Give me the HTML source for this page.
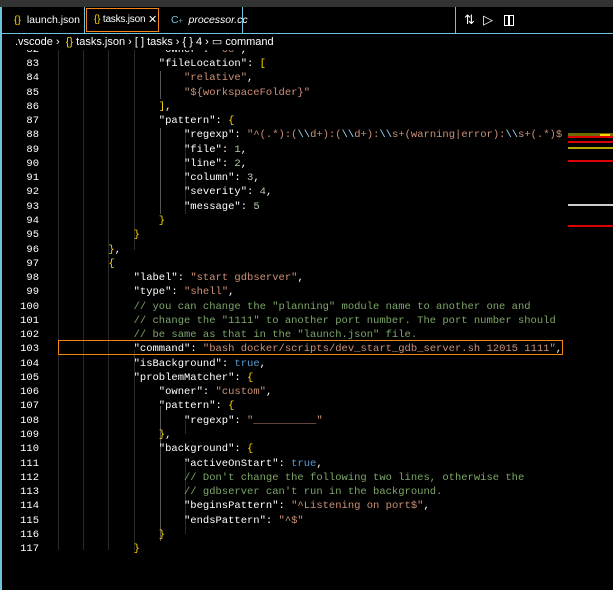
<!DOCTYPE html>
<html><head><meta charset="utf-8"><style>
*{margin:0;padding:0;box-sizing:border-box}
body{width:613px;height:590px;background:#000;overflow:hidden;position:relative;font-family:"Liberation Sans",sans-serif;color:#fff}
.top{position:absolute;left:0;top:0;width:613px;height:7px;background:#333}
.tabs{position:absolute;left:0;top:7px;width:613px;height:27px;border-left:2px solid #6fc3df;border-bottom:1px solid #6fc3df}
.tab{position:absolute;top:0;height:26px;font-size:10.5px;line-height:26px;color:#fff;white-space:nowrap}
.vd{position:absolute;top:0;width:1px;height:26px;background:#6fc3df}
.bc{position:absolute;left:0;top:34px;width:613px;height:16px;border-left:2px solid #6fc3df;font-size:11px;line-height:16px;color:#fff;padding-left:13px;white-space:pre}
.ed{position:absolute;left:0;top:50px;width:613px;height:540px;border-left:2px solid #6fc3df;overflow:hidden}
.ln{position:absolute;width:37px;text-align:right;font:10.5px/14.27px "Liberation Mono","DejaVu Sans Mono",monospace;color:#fff}
.cl{position:absolute;font:10.5px/14.27px "Liberation Mono","DejaVu Sans Mono",monospace;white-space:pre;color:#fff}
.g{position:absolute;width:1px;background:#2a2a2a}
.s{color:#ce9178}.k{color:#fff}.c{color:#7ca668}.n{color:#b5cea8}.b{color:#569cd6}.y{color:#ffd700}.e{color:#9cdcfe}
.mm{position:absolute;height:2px}
</style></head><body>
<div class="top"></div>
<div class="tabs">
 <div class="tab" style="left:12px"><span style="color:#ffd700">{}</span>&nbsp; launch.json</div>
 <div class="vd" style="left:82px"></div>
 <div style="position:absolute;left:84px;top:1px;width:73px;height:24px;border:1px solid #f38518"></div>
 <div class="tab" style="left:92px;font-size:10px;letter-spacing:-0.2px"><span style="color:#ffd700">{}</span> tasks.json</div>
 <div class="tab" style="left:146px;font-size:11px">✕</div>
 <div class="tab" style="left:169px"><span style="color:#6fc3df">C</span><span style="font-size:7px;color:#6fc3df">+</span>&nbsp; <i>processor.cc</i></div>
 <div class="vd" style="left:240px"></div>
 <div class="vd" style="left:453px"></div>
 <div class="tab" style="left:462px;font-size:13px">⇅</div>
 <div class="tab" style="left:481px;font-size:13px">▷</div>
 <div class="tab" style="left:502px;width:10px;height:11px;top:8px;border:1.5px solid #fff"></div>
 <div style="position:absolute;left:506px;top:8px;width:1.5px;height:11px;background:#fff"></div>
</div>
<div class="bc">.vscode ›  <span style="color:#ffd700">{}</span> tasks.json › [ ] tasks › { } 4 › ▭ command</div>
<div class="ed">
<div class="g" style="left:56px;top:0;height:500px"></div>
<div class="g" style="left:81px;top:0;height:500px"></div>
<div class="g" style="left:106px;top:0;height:500px"></div>
<div class="g" style="left:132px;top:0;height:200px"></div>
<div class="g" style="left:132px;top:300px;height:200px"></div>
<div class="g" style="left:158px;top:21px;height:28px;background:#555"></div>
<div class="g" style="left:158px;top:78px;height:86px;background:#555"></div>
<div class="g" style="left:158px;top:356px;height:135px;background:#555"></div>
<div class="g" style="left:183px;top:78px;height:86px"></div>
<div class="g" style="left:183px;top:370px;height:14px"></div>
<div class="g" style="left:183px;top:413px;height:71px"></div>
<div style="position:absolute;left:56px;top:290px;width:505px;height:15px;border:1px solid #f38518"></div>
<div id="code"></div>
<div class="mm" style="left:566px;top:83px;width:47px;height:4px;background:#6b6b00"></div>
<div class="mm" style="left:598px;top:84px;width:10px;height:3px;background:#ffd700"></div>
<div class="mm" style="left:566px;top:86px;width:47px;background:#d00"></div>
<div class="mm" style="left:566px;top:91px;width:47px;background:#d00"></div>
<div class="mm" style="left:566px;top:97px;width:47px;background:#b9a600"></div>
<div class="mm" style="left:566px;top:110px;width:47px;background:#d00"></div>
<div class="mm" style="left:566px;top:154px;width:47px;background:#ccc"></div>
<div class="mm" style="left:566px;top:175px;width:47px;background:#d00"></div>
</div>
<script>
const L=[
[82,4,'<span class="k">"owner"</span>: <span class="s">"cc"</span>,'],
[83,4,'<span class="k">"fileLocation"</span>: <span class="y">[</span>'],
[84,5,'<span class="s">"relative"</span>,'],
[85,5,'<span class="s">"${workspaceFolder}"</span>'],
[86,4,'<span class="y">]</span>,'],
[87,4,'<span class="k">"pattern"</span>: <span class="y">{</span>'],
[88,5,'<span class="k">"regexp"</span>: <span class="s">"^(.*):(<span class="e">\\\\</span>d+):(<span class="e">\\\\</span>d+):<span class="e">\\\\</span>s+(warning|error):<span class="e">\\\\</span>s+(.*)$</span>'],
[89,5,'<span class="k">"file"</span>: <span class="n">1</span>,'],
[90,5,'<span class="k">"line"</span>: <span class="n">2</span>,'],
[91,5,'<span class="k">"column"</span>: <span class="n">3</span>,'],
[92,5,'<span class="k">"severity"</span>: <span class="n">4</span>,'],
[93,5,'<span class="k">"message"</span>: <span class="n">5</span>'],
[94,4,'<span class="y">}</span>'],
[95,3,'<span class="y">}</span>'],
[96,2,'<span class="y">}</span>,'],
[97,2,'<span class="y">{</span>'],
[98,3,'<span class="k">"label"</span>: <span class="s">"start gdbserver"</span>,'],
[99,3,'<span class="k">"type"</span>: <span class="s">"shell"</span>,'],
[100,3,'<span class="c">// you can change the "planning" module name to another one and</span>'],
[101,3,'<span class="c">// change the "1111" to another port number. The port number should</span>'],
[102,3,'<span class="c">// be same as that in the "launch.json" file.</span>'],
[103,3,'<span class="k">"command"</span>: <span class="s">"bash docker/scripts/dev_start_gdb_server.sh 12015 1111"</span>,'],
[104,3,'<span class="k">"isBackground"</span>: <span class="b">true</span>,'],
[105,3,'<span class="k">"problemMatcher"</span>: <span class="y">{</span>'],
[106,4,'<span class="k">"owner"</span>: <span class="s">"custom"</span>,'],
[107,4,'<span class="k">"pattern"</span>: <span class="y">{</span>'],
[108,5,'<span class="k">"regexp"</span>: <span class="s">"__________"</span>'],
[109,4,'<span class="y">}</span>,'],
[110,4,'<span class="k">"background"</span>: <span class="y">{</span>'],
[111,5,'<span class="k">"activeOnStart"</span>: <span class="b">true</span>,'],
[112,5,'<span class="c">// Don\'t change the following two lines, otherwise the</span>'],
[113,5,'<span class="c">// gdbserver can\'t run in the background.</span>'],
[114,5,'<span class="k">"beginsPattern"</span>: <span class="s">"^Listening on port$"</span>,'],
[115,5,'<span class="k">"endsPattern"</span>: <span class="s">"^$"</span>'],
[116,4,'<span class="y">}</span>'],
[117,3,'<span class="y">}</span>']];
let h='';
for(const [n,l,t] of L){const top=7+(n-83)*14.27;
h+=`<div class="ln" style="top:${top}px">${n}</div><div class="cl" style="top:${top}px;left:${56+l*25.2}px">${t}</div>`;}
document.getElementById('code').innerHTML=h;
</script>
</body></html>
